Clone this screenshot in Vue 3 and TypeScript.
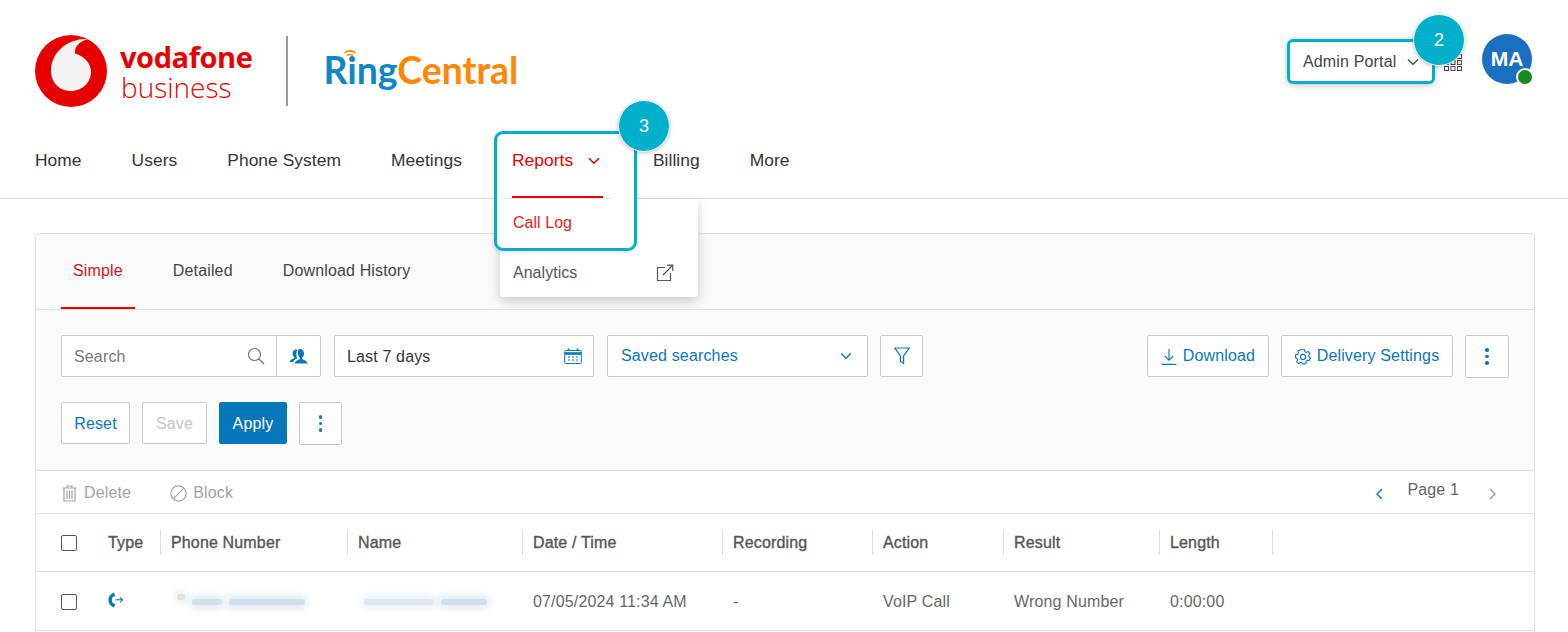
<script setup lang="ts">
const navBefore: string[] = ['Home', 'Users', 'Phone System', 'Meetings']
const navAfter: string[] = ['Billing', 'More']
const tabs: string[] = ['Simple', 'Detailed', 'Download History']
const cols: string[] = ['Phone Number', 'Name', 'Date / Time', 'Recording', 'Action', 'Result', 'Length']
</script>

<template>
  <div class="page">
    <header class="header">
      <div class="logos">
        <svg class="vf-mark" width="72" height="72" viewBox="0 0 72 72">
          <circle cx="36" cy="36" r="36" fill="#e60000" />
          <path d="M53 4C33 3 16 17 16 36C16 47.5 24.5 56 36 56C47.5 56 56 47 56 37C56 27 48 21 40 18.5C39 12 45 6 53 4Z" fill="#f2f2f2" />
        </svg>
        <div class="vf-text">
          <div class="vf-name">vodafone</div>
          <div class="vf-biz">business</div>
        </div>
        <div class="logo-sep"></div>
        <div class="rc">
          <span class="rc-ring">Ring</span><span class="rc-central">Central</span>
          <svg class="rc-wifi" width="14" height="9" viewBox="0 0 14 9">
            <path d="M1.5 5C4.5 2.2 9.5 2.2 12.5 5" fill="none" stroke="#ff8800" stroke-width="1.6" />
            <path d="M4 7.6C5.8 6.2 8.2 6.2 10 7.6" fill="none" stroke="#ff8800" stroke-width="1.4" />
          </svg>
        </div>
      </div>
      <div class="head-right">
        <div class="admin">
          <span>Admin Portal</span>
          <svg width="12" height="8" viewBox="0 0 12 8"><path d="M1 1.5L6 6.3L11 1.5" fill="none" stroke="#444" stroke-width="1.3" /></svg>
          <div class="callout callout-2">2</div>
        </div>
        <svg class="apps" width="18" height="18" viewBox="0 0 18 18" fill="none" stroke-width="1">
          <rect x=".5" y=".5" width="4" height="4" stroke="#444" /><rect x="7" y=".5" width="4" height="4" stroke="#444" /><rect x="13.500" y=".5" width="4" height="4" stroke="#8a3a3a" />
          <rect x=".5" y="6.500" width="4" height="4" stroke="#8a3a3a" /><rect x="7" y="6.500" width="4" height="4" stroke="#444" /><rect x="13.500" y="6.500" width="4" height="4" stroke="#8a3a3a" />
          <rect x=".5" y="12.500" width="4" height="4" stroke="#444" /><rect x="7" y="12.500" width="4" height="4" stroke="#6a3a80" /><rect x="13.500" y="12.500" width="4" height="4" stroke="#444" />
        </svg>
        <div class="avatar">MA<span class="presence"></span></div>
      </div>
    </header>

    <nav class="nav">
      <a v-for="n in navBefore" :key="n" class="nav-item">{{ n }}</a>
      <div class="nav-item nav-reports">
        <div class="menu">
          <div class="menu-row">
            <span>Analytics</span>
            <svg width="18" height="18" viewBox="0 0 18 18" fill="none" stroke="#555" stroke-width="1.2">
              <path d="M9 3.5H1.5V16.5H14.5V9" /><path d="M7 11L16.5 1.5M11 1.2H16.8V7" />
            </svg>
          </div>
        </div>
        <div class="frame">
          <div class="frame-label">
            <span>Reports</span>
            <svg width="12" height="8" viewBox="0 0 12 8"><path d="M1 1.2L6 6.2L11 1.2" fill="none" stroke="#e60000" stroke-width="1.6" /></svg>
          </div>
          <div class="frame-rule"><div class="frame-red"></div></div>
          <div class="frame-sub">Call Log</div>
          <div class="callout callout-3">3</div>
        </div>
      </div>
      <a v-for="n in navAfter" :key="n" class="nav-item">{{ n }}</a>
    </nav>

    <section class="card">
      <div class="tabs">
        <div v-for="(t, i) in tabs" :key="t" class="tab" :class="{ active: i === 0 }">{{ t }}</div>
      </div>

      <div class="filters">
        <div class="f-row">
          <div class="search">
            <div class="search-input">
              <span>Search</span>
              <svg width="18" height="18" viewBox="0 0 18 18" fill="none" stroke="#777" stroke-width="1.2"><circle cx="7.5" cy="7.5" r="6" /><path d="M12 12L17 17" /></svg>
            </div>
            <div class="search-user">
              <svg width="19" height="17" viewBox="0 0 19 17" fill="#0a76b7">
                <path d="M11 1C13.4 1 15 3 15 5.4C15 7.4 14 9 13 9.8V11C15 11.8 18 12.8 18.6 15.5H5.6C6.2 12.8 9.2 11.8 11 11V9.8C9.8 9 9 7.4 9 5.4C9 3 8.800 1 11 1Z" />
                <path d="M7 1.6C5 1.6 3.6 3.4 3.6 5.6C3.6 7.2 4.3 8.6 5.2 9.3V10.2C3.4 10.8 1 11.8 .5 14H4.2C4.8 12.2 6.6 11 8.4 10.3C7.6 9 7.2 7.4 7.4 5.2C7.5 3.8 7.9 2.4 8.6 2C8.2 1.7 7.6 1.6 7 1.6Z" />
              </svg>
            </div>
          </div>
          <div class="date">
            <span>Last 7 days</span>
            <svg width="18" height="16" viewBox="0 0 18 16" fill="none" stroke="#0a76b7">
              <rect x=".7" y="2.5" width="16.6" height="13" rx="1" />
              <path d="M.7 5.5H17.3" stroke-width="2.6" /><path d="M4.5 .5V3M13.5 .5V3" stroke-width="1.6" />
              <path d="M4 9H6M8 9H10M12 9H14M4 12H6M8 12H10M12 12H14" stroke-width="1" />
            </svg>
          </div>
          <div class="saved">
            <span>Saved searches</span>
            <svg width="12" height="8" viewBox="0 0 12 8"><path d="M1.2 1.5L6 6.2L10.8 1.5" fill="none" stroke="#0a76b7" stroke-width="1.4" /></svg>
          </div>
          <button class="btn icon-btn filter-btn">
            <svg width="16" height="18" viewBox="0 0 16 18" fill="none" stroke="#0a76b7" stroke-width="1.2"><path d="M.8 1H15.2L9.6 9V16.5L6.4 14.5V9Z" /></svg>
          </button>
          <div class="spacer"></div>
          <button class="btn dl dl-a">
            <svg width="16" height="16" viewBox="0 0 16 16" fill="none" stroke="#0a76b7" stroke-width="1.1"><path d="M8 0V11M3.8 7L8 11.3L12.2 7M.5 15.4H15.5" /></svg>
            Download
          </button>
          <button class="btn dl dl-b">
            <svg width="16" height="16" viewBox="0 0 16 16" fill="none" stroke="#0a76b7" stroke-width="1.1">
              <path d="M6.6 .8H9.4L9.9 2.7L11.6 3.4L13.3 2.4L15 4.6L13.7 6L13.9 7.9L15.4 9L14.2 11.5L12.3 11.2L11 12.6L11 14.5L8.3 15.2L7 13.8L5.2 13.5L3.6 14.6L1.6 12.6L2.6 11L2 9.2L.4 8.4L.8 5.6L2.7 5.2L3.6 3.6L3 1.9L5.4 .8Z" stroke-linejoin="round" />
              <circle cx="8" cy="8" r="2.6" />
            </svg>
            Delivery Settings
          </button>
          <button class="btn icon-btn kebab-btn"><span class="kebab"><i></i><i></i><i></i></span></button>
        </div>
        <div class="f-row">
          <button class="btn plain reset">Reset</button>
          <button class="btn plain save" disabled>Save</button>
          <button class="btn apply">Apply</button>
          <button class="btn icon-btn kebab-btn"><span class="kebab"><i></i><i></i><i></i></span></button>
        </div>
      </div>

      <div class="toolbar">
        <div class="tool del">
          <svg width="15" height="17" viewBox="0 0 15 17" fill="none" stroke="#a3a3a3" stroke-width="1.2">
            <path d="M.5 3H14.5M5 3V1H10V3M2 3V16H13V3M5 5.5V14M7.5 5.5V14M10 5.5V14" />
          </svg>
          Delete
        </div>
        <div class="tool block">
          <svg width="17" height="17" viewBox="0 0 17 17" fill="none" stroke="#a3a3a3" stroke-width="1.2"><circle cx="8.5" cy="8.5" r="7.7" /><path d="M3.2 13.8L13.8 3.2" /></svg>
          Block
        </div>
        <div class="spacer"></div>
        <div class="pager">
          <svg width="9" height="12" viewBox="0 0 9 12"><path d="M7 1L2 6L7 11" fill="none" stroke="#0a76b7" stroke-width="1.4" /></svg>
          <span>Page 1</span>
          <svg width="9" height="12" viewBox="0 0 9 12"><path d="M2 1L7 6L2 11" fill="none" stroke="#999" stroke-width="1.4" /></svg>
        </div>
      </div>

      <div class="grid head">
        <div class="c-check"><span class="check"></span></div>
        <div class="c-type">Type</div>
        <div v-for="c in cols" :key="c" class="c-th">{{ c }}</div>
        <div class="c-th-end"></div>
      </div>

      <div class="grid row">
        <div class="c-check"><span class="check"></span></div>
        <div class="c-type">
          <svg class="call-icon" width="16" height="16" viewBox="0 0 16 16" fill="none">
            <path d="M6 .5C2 2 .5 5 .5 8C.5 11 2 14 6 15.500L7.200 12L4.600 11C3.900 9 3.900 7 4.600 5L7.200 4Z" fill="#0a76b7" />
            <path d="M7.500 7.800H14.500M12 5.300L14.500 7.800L12 10.300" stroke="#0a76b7" stroke-width="1.100" />
          </svg>
        </div>
        <div class="c-td">
          <div class="smudge smudge-phone"><i></i><i></i><i></i></div>
        </div>
        <div class="c-td">
          <div class="smudge smudge-name"><i></i><i></i></div>
        </div>
        <div class="c-td">07/05/2024 11:34 AM</div>
        <div class="c-td">-</div>
        <div class="c-td">VoIP Call</div>
        <div class="c-td">Wrong Number</div>
        <div class="c-td">0:00:00</div>
        <div></div>
      </div>
    </section>
  </div>
</template>

<style>
html, body { margin: 0; height: 632px; overflow: hidden; background: #fff; }
</style>

<style scoped>
.page { width: 1568px; height: 632px; overflow: hidden; font-family: "Liberation Sans", Arial, sans-serif; color: #333; font-size: 16px; letter-spacing: .15px; }

.header { display: flex; justify-content: space-between; align-items: flex-start; height: 122px; box-sizing: border-box; padding: 34px 36px 0 35px; }
.logos { display: flex; align-items: flex-start; margin-top: 1px; }
.vf-text { margin-left: 13px; margin-top: 6px; color: #e60000; }
.vf-name { font-family: "Open Sans", sans-serif; font-weight: 700; font-size: 29px; line-height: 31px; letter-spacing: -.4px; }
.vf-biz { font-family: "Open Sans", sans-serif; font-weight: 300; font-size: 28px; line-height: 31px; margin-left: 1px; letter-spacing: 0; }
.logo-sep { width: 2px; height: 70px; background: #999; margin: 1px 0 0 33px; }
.rc { position: relative; margin: 13px 0 0 36px; font-family: Lato, sans-serif; font-weight: 700; font-size: 37.4px; line-height: 44px; letter-spacing: 0; }
.rc-ring { color: #0f87c6; }
.rc-central { color: #ff8800; }
.rc-wifi { position: absolute; left: 19px; top: 0; }

.head-right { display: flex; align-items: flex-start; }
.admin { position: relative; box-sizing: border-box; width: 148px; height: 45px; margin-top: 5px; padding: 0 13px 0 13px; background: #fff; border: 3px solid #00b0ca; border-radius: 6px; display: flex; align-items: center; justify-content: space-between; color: #444; box-shadow: 0 1px 6px rgba(0, 0, 0, .25); z-index: 2; }
.apps { margin: 20px 20px 0 9px; }
.avatar { position: relative; width: 50px; height: 50px; border-radius: 50%; background: #1a6fc0; color: #fff; font-weight: 700; font-size: 21px; letter-spacing: 0; display: flex; align-items: center; justify-content: center; }
.presence { position: absolute; right: -2px; bottom: -2px; width: 14px; height: 14px; border: 2px solid #fff; border-radius: 50%; background: #1a8a1a; }

.callout { position: absolute; width: 52px; height: 52px; box-sizing: border-box; border-radius: 50%; background: #00b0ca; border: 1.5px solid #f4fafb; color: #fff; font-size: 18px; display: flex; align-items: center; justify-content: center; box-shadow: 0 1px 4px rgba(0, 0, 0, .25); }
.callout-2 { left: 123px; top: -28px; }
.callout-3 { left: 121px; top: -34px; }

.nav { display: flex; gap: 50px; height: 77px; box-sizing: border-box; padding: 27px 0 0 35px; border-bottom: 1px solid #ddd; font-size: 17.4px; line-height: 22px; color: #333; letter-spacing: .05px; }
.nav-reports { position: relative; width: 91px; }
.menu { position: absolute; left: -12px; top: 50px; width: 198px; height: 98px; box-sizing: border-box; background: #fff; border-radius: 0 0 3px 3px; box-shadow: 0 4px 12px rgba(0, 0, 0, .2); display: flex; align-items: flex-end; z-index: 2; }
.menu-row { flex: 1; height: 50px; box-sizing: border-box; padding: 2px 24px 0 13px; display: flex; align-items: center; justify-content: space-between; font-size: 16px; color: #555; }
.frame { position: absolute; left: -18px; top: -18px; width: 143px; height: 120px; box-sizing: border-box; border: 3px solid #00b0ca; border-radius: 9px; background: #fff; z-index: 3; box-shadow: 0 1px 4px rgba(0, 0, 0, .15); }
.frame-label { display: flex; align-items: center; justify-content: space-between; width: 88px; margin: 15px 0 0 15px; color: #e60000; }
.frame-label svg { margin-top: 1px; }
.frame-rule { margin: 25px 0 0 4px; width: 111px; border-bottom: 1px solid #e3e3e3; }
.frame-red { margin-left: 11px; width: 91px; height: 2px; background: #e60000; }
.frame-sub { margin: 13px 0 0 16px; font-size: 16px; line-height: 22px; color: #ec1c24; }

.card { margin: 34px 0 0 35px; width: 1500px; min-height: 460px; box-sizing: border-box; border: 1px solid #e0e0e0; border-radius: 4px 4px 0 0; }
.tabs { display: flex; gap: 26px; height: 75px; padding-left: 25px; background: #fafafa; border-bottom: 1px solid #e0e0e0; border-radius: 4px 4px 0 0; }
.tab { padding: 0 12px; height: 75px; box-sizing: border-box; line-height: 73px; color: #444; }
.tab.active { color: #d8101a; border-bottom: 2px solid #e60000; }

.filters { background: #fafafa; padding: 25px 25px 26px 25px; display: flex; flex-direction: column; gap: 25px; border-bottom: 1px solid #e0e0e0; }
.f-row { display: flex; gap: 12px; height: 42px; }
.spacer { flex: 1; }
.search { display: flex; width: 260px; box-sizing: border-box; background: #fff; border: 1px solid #c8c8c8; border-radius: 2px; margin-right: 1px; }
.search-input { flex: 1; display: flex; align-items: center; justify-content: space-between; padding: 0 11px 0 12px; color: #777; border-right: 1px solid #c8c8c8; }
.search-input span, .date span { margin-top: 1px; }
.search-user { width: 43px; display: flex; align-items: center; justify-content: center; }
.date, .saved { box-sizing: border-box; background: #fff; border: 1px solid #c8c8c8; border-radius: 2px; display: flex; align-items: center; justify-content: space-between; }
.date { width: 260px; padding: 0 11px 0 12px; color: #333; margin-right: 1px; }
.saved { width: 261px; padding: 0 15px 0 13px; color: #0a76b7; }
.saved span { margin-top: -1px; }
.btn { box-sizing: border-box; height: 42px; background: #fff; border: 1px solid #c8c8c8; border-radius: 2px; font: inherit; letter-spacing: inherit; color: #0a76b7; display: flex; align-items: center; justify-content: center; padding: 0; }
.dl { gap: 6px; }
.dl svg { margin-top: 2px; }
.dl-a { width: 122px; }
.dl-b { width: 172px; }
.filter-btn { width: 43px; }
.kebab-btn { width: 44px; height: 43px; }
.f-row:last-child .kebab-btn { width: 43px; }
.kebab { display: flex; flex-direction: column; gap: 3px; }
.kebab i { width: 3.5px; height: 3.5px; border-radius: 50%; background: #0a76b7; display: block; }
.reset, .save, .apply { padding-top: 2px; }
.reset { width: 69px; }
.save { width: 65px; color: #c4c4c4; }
.apply { width: 68px; background: #0677b9; border-color: #0677b9; color: #fff; }

.toolbar { display: flex; align-items: center; height: 42px; padding: 0 37px 0 26px; background: #fff; border-bottom: 1px solid #e0e0e0; color: #a3a3a3; }
.tool { display: flex; align-items: center; gap: 7px; padding-top: 2px; }
.block { margin-left: 39px; gap: 6px; }
.pager { display: flex; align-items: center; color: #666; padding-top: 2px; }
.pager span { margin: -7px 29px 0 23px; }
.pager svg { margin-top: 1px; }

.grid { display: grid; grid-template-columns: 47px 52px 187px 175px 200px 150px 131px 156px 113px 1fr; padding-left: 25px; align-items: center; background: #fff; }
.head { height: 57px; border-bottom: 1px solid #e0e0e0; color: #555; }
.row { box-sizing: border-box; height: 59px; padding-top: 1px; border-bottom: 1px solid #e0e0e0; color: #666; }
.check { display: block; width: 14px; height: 14px; border: 1px solid #555; border-radius: 2px; background: #fff; }
.c-check, .c-type { display: flex; align-items: center; }
.head .c-type, .c-th { -webkit-text-stroke: .35px #555; }
.c-th, .c-th-end { box-sizing: border-box; height: 25px; line-height: 25px; border-left: 1px solid #ddd; padding-left: 10px; }
.c-td { padding-left: 11px; }
.call-icon { margin-top: -3px; }
.smudge { display: flex; align-items: center; gap: 7px; height: 14px; padding-left: 6px; }
.smudge i { display: block; height: 6px; border-radius: 3px; background: #d0e1ee; box-shadow: 0 0 9px 3px #dbe8f2; }
.smudge-phone i:nth-child(1) { width: 8px; background: #e0e0e0; box-shadow: 0 0 8px 2px #e6e6e6; margin: -10px 0 0 0; }
.smudge-phone i:nth-child(2) { width: 30px; }
.smudge-phone i:nth-child(3) { width: 76px; }
.smudge-name i:nth-child(1) { width: 70px; background: #dde8f1; box-shadow: 0 0 9px 3px #e6eef5; }
.smudge-name i:nth-child(2) { width: 46px; }
</style>
